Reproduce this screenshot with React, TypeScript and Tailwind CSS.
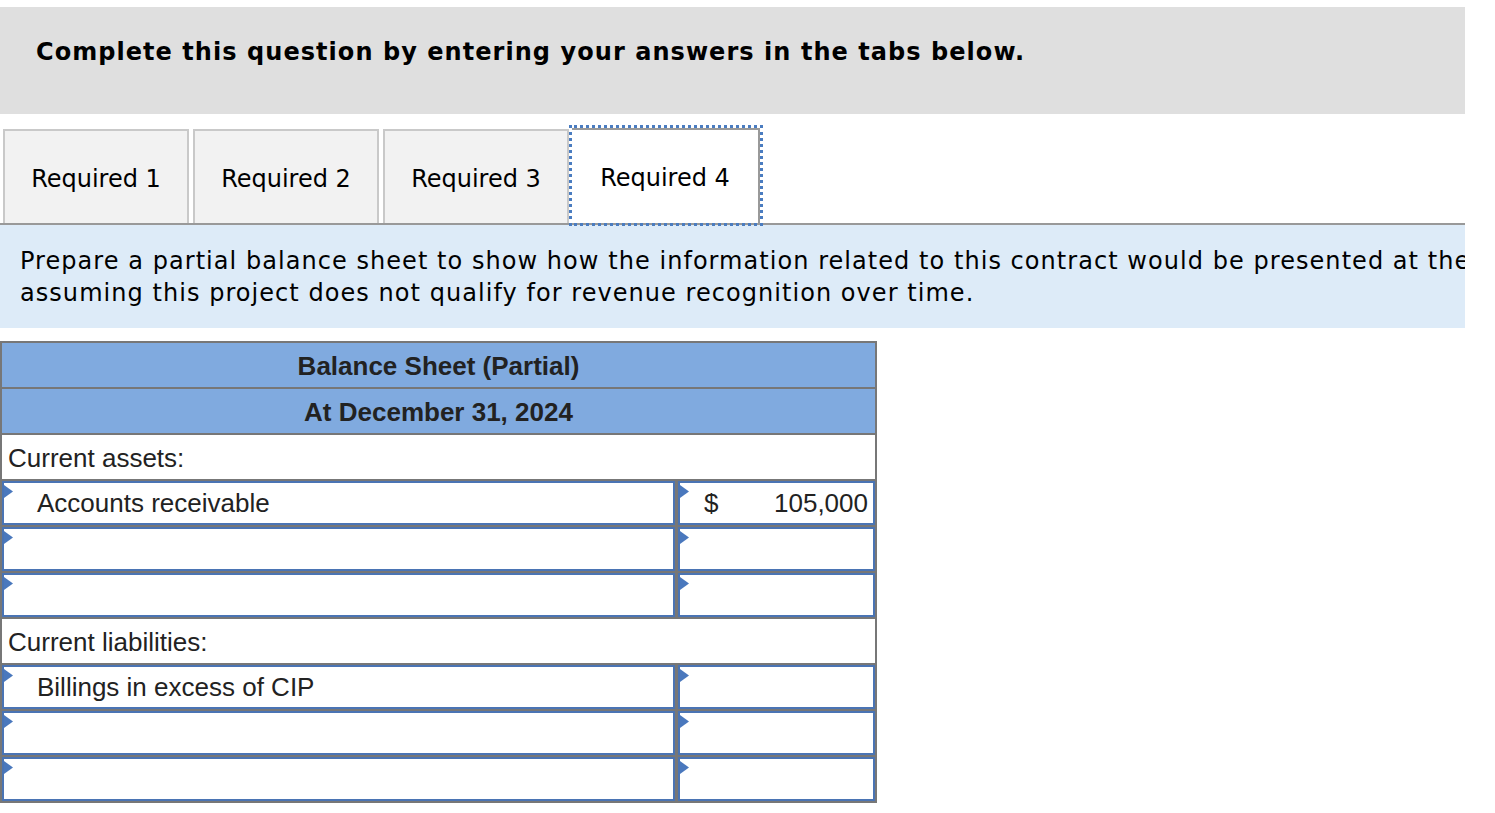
import React from 'react';

const verdana = { fontFamily: '"DejaVu Sans", Verdana, sans-serif' };

const tabs = ['Required 1', 'Required 2', 'Required 3', 'Required 4'];

type Row =
  | { kind: 'label'; text: string }
  | { kind: 'input'; text?: string; dollar?: boolean; amount?: string };

const rows: Row[] = [
  { kind: 'label', text: 'Current assets:' },
  { kind: 'input', text: 'Accounts receivable', dollar: true, amount: '105,000' },
  { kind: 'input' },
  { kind: 'input' },
  { kind: 'label', text: 'Current liabilities:' },
  { kind: 'input', text: 'Billings in excess of CIP' },
  { kind: 'input' },
  { kind: 'input' },
];

function Marker() {
  return (
    <svg className="absolute left-0 top-[2px]" width="9" height="13" viewBox="0 0 9 13">
      <path d="M0 0 L9 6.5 L0 13 Z" fill="#4a78bd" />
    </svg>
  );
}

function InputCell({ children, className }: { children?: React.ReactNode; className?: string }) {
  return (
    <div className={`relative h-full border-2 border-[#4a74b4] bg-white ${className ?? ''}`}>
      <Marker />
      {children}
    </div>
  );
}

export default function App() {
  return (
    <div className="w-[1495px] bg-white text-black">
      <div className="w-[1465px]">
        <div className="mt-[7px] h-[107px] bg-[#dfdfdf] pl-9 pt-[31px]" style={verdana}>
          <h1 className="text-[24px] font-bold leading-[28px] tracking-[1.05px]">
            Complete this question by entering your answers in the tabs below.
          </h1>
        </div>

        <div className="mt-[15px] flex h-[96px] items-end gap-1 border-b-2 border-[#999] pl-[3px]" style={verdana}>
          {tabs.map((t, i) =>
            i === 3 ? (
              <div
                key={t}
                className="-mb-[3px] -ml-1 h-[101px] w-[194px] border-[3px] border-dotted border-[#4a7cc0]"
              >
                <div className="flex h-full items-center justify-center border-t-2 border-r-2 border-[#999] bg-white pt-[3px] text-[24px]">
                  {t}
                </div>
              </div>
            ) : (
              <div
                key={t}
                className="flex h-[94px] w-[186px] items-center justify-center border-2 border-b-0 border-[#c9c9c9] bg-[#f2f2f2] pt-[3px] text-[24px]"
              >
                {t}
              </div>
            )
          )}
        </div>

        <div
          className="h-[103px] overflow-hidden bg-[#ddebf8] pl-5 pt-[20px] text-[24px] leading-[32px] tracking-[1.05px]"
          style={verdana}
        >
          <p className="whitespace-nowrap">
            Prepare a partial balance sheet to show how the information related to this contract would be presented at the
          </p>
          <p className="whitespace-nowrap">assuming this project does not qualify for revenue recognition over time.</p>
        </div>
      </div>

      <div
        className="mt-[13px] w-[877px] border-2 border-[#777] text-[26px] text-[#222]"
        style={{ fontFamily: '"Liberation Sans", Arial, Helvetica, sans-serif' }}
      >
        <div className="flex h-[44px] items-center justify-center bg-[#80aadf] pt-[2px] font-bold">
          Balance Sheet (Partial)
        </div>
        <div className="flex h-[46px] items-center justify-center border-t-2 border-[#777] bg-[#80aadf] pt-[2px] font-bold">
          At December 31, 2024
        </div>
        {rows.map((r, i) =>
          r.kind === 'label' ? (
            <div key={i} className="flex h-[46px] items-center border-t-2 border-[#777] pl-[6px] pt-[2px]">
              {r.text}
            </div>
          ) : (
            <div key={i} className="flex h-[46px] gap-[3px] border-t-2 border-[#777] bg-[#777]">
              <InputCell className="flex w-[673px] items-center pl-[33px]">{r.text}</InputCell>
              <InputCell className="flex flex-1 items-center justify-between pl-[24px] pr-[5px]">
                {r.dollar && <span>$</span>}
                {r.amount && <span>{r.amount}</span>}
              </InputCell>
            </div>
          )
        )}
      </div>
    </div>
  );
}
